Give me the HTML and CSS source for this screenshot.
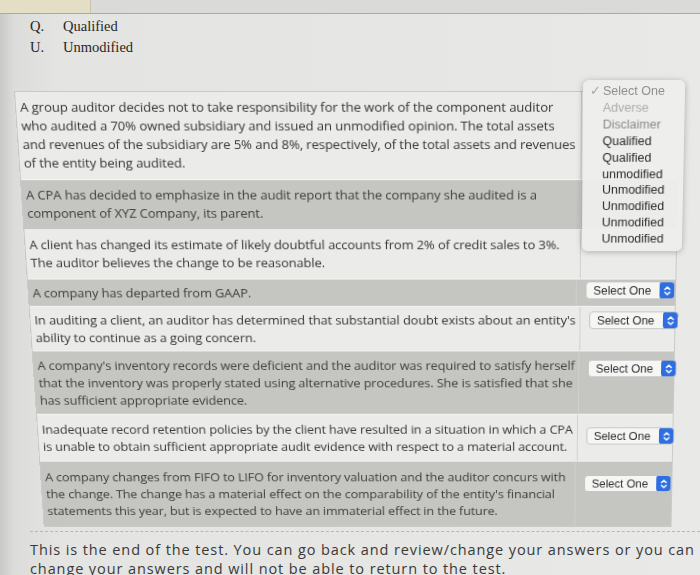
FILE: index.html
```html
<!DOCTYPE html>
<html>
<head>
<meta charset="utf-8">
<link rel="stylesheet" href="styles.css">
</head>
<body>
<div class="page">
  <div class="topbar">
    <div class="timer"><span>1 minute:</span></div>
  </div>

  <ul class="legend">
    <li><span class="key">Q.</span><span>Qualified</span></li>
    <li><span class="key">U.</span><span>Unmodified</span></li>
  </ul>

  <div class="quiz">
    <div class="matching">
      <div class="row light r1">
        <div class="q">A group auditor decides not to take responsibility for the work of the component auditor<br>who audited a 70% owned subsidiary and issued an unmodified opinion. The total assets<br>and revenues of the subsidiary are 5% and 8%, respectively, of the total assets and revenues<br>of the entity being audited.</div>
        <div class="a"></div>
      </div>
      <div class="row dark r2">
        <div class="q">A CPA has decided to emphasize in the audit report that the company she audited is a<br>component of XYZ Company, its parent.</div>
        <div class="a"></div>
      </div>
      <div class="row light r3">
        <div class="q">A client has changed its estimate of likely doubtful accounts from 2% of credit sales to 3%.<br>The auditor believes the change to be reasonable.</div>
        <div class="a"></div>
      </div>
      <div class="row dark r4">
        <div class="q">A company has departed from GAAP.</div>
        <div class="a"><div class="select"><span>Select One</span><i class="step"><svg viewBox="0 0 10 14" width="10" height="14"><path d="M2.5 5.5 L5 3 L7.5 5.5 M2.5 8.5 L5 11 L7.5 8.5" fill="none" stroke="#fff" stroke-width="1.6" stroke-linecap="round" stroke-linejoin="round"/></svg></i></div></div>
      </div>
      <div class="row light r5">
        <div class="q">In auditing a client, an auditor has determined that substantial doubt exists about an entity's<br>ability to continue as a going concern.</div>
        <div class="a"><div class="select"><span>Select One</span><i class="step"><svg viewBox="0 0 10 14" width="10" height="14"><path d="M2.5 5.5 L5 3 L7.5 5.5 M2.5 8.5 L5 11 L7.5 8.5" fill="none" stroke="#fff" stroke-width="1.6" stroke-linecap="round" stroke-linejoin="round"/></svg></i></div></div>
      </div>
      <div class="row dark r6">
        <div class="q">A company's inventory records were deficient and the auditor was required to satisfy herself<br>that the inventory was properly stated using alternative procedures. She is satisfied that she<br>has sufficient appropriate evidence.</div>
        <div class="a"><div class="select"><span>Select One</span><i class="step"><svg viewBox="0 0 10 14" width="10" height="14"><path d="M2.5 5.5 L5 3 L7.5 5.5 M2.5 8.5 L5 11 L7.5 8.5" fill="none" stroke="#fff" stroke-width="1.6" stroke-linecap="round" stroke-linejoin="round"/></svg></i></div></div>
      </div>
      <div class="row light r7">
        <div class="q">Inadequate record retention policies by the client have resulted in a situation in which a CPA<br>is unable to obtain sufficient appropriate audit evidence with respect to a material account.</div>
        <div class="a"><div class="select"><span>Select One</span><i class="step"><svg viewBox="0 0 10 14" width="10" height="14"><path d="M2.5 5.5 L5 3 L7.5 5.5 M2.5 8.5 L5 11 L7.5 8.5" fill="none" stroke="#fff" stroke-width="1.6" stroke-linecap="round" stroke-linejoin="round"/></svg></i></div></div>
      </div>
      <div class="row dark r8">
        <div class="q">A company changes from FIFO to LIFO for inventory valuation and the auditor concurs with<br>the change. The change has a material effect on the comparability of the entity's financial<br>statements this year, but is expected to have an immaterial effect in the future.</div>
        <div class="a"><div class="select"><span>Select One</span><i class="step"><svg viewBox="0 0 10 14" width="10" height="14"><path d="M2.5 5.5 L5 3 L7.5 5.5 M2.5 8.5 L5 11 L7.5 8.5" fill="none" stroke="#fff" stroke-width="1.6" stroke-linecap="round" stroke-linejoin="round"/></svg></i></div></div>
      </div>
    </div>

    <ul class="menu">
      <li class="checked"><span class="tick">✓</span>Select One</li>
      <li class="dim">Adverse</li>
      <li class="mid">Disclaimer</li>
      <li>Qualified</li>
      <li>Qualified</li>
      <li>unmodified</li>
      <li>Unmodified</li>
      <li>Unmodified</li>
      <li>Unmodified</li>
      <li>Unmodified</li>
    </ul>
  </div>

  <div class="sep"></div>

  <p class="endnote">This is the end of the test. You can go back and review/change your answers or you can submit.<br>change your answers and will not be able to return to the test.</p>
</div>
</body>
</html>
```

FILE: styles.css
```css
html, body {
  margin: 0;
  padding: 0;
  height: 100%;
  overflow: hidden;
}

body {
  background: linear-gradient(90deg, #c9c9c7 0px, #dcdcda 14px, #e4e4e2 60px, #e6e6e4 400px, #e9e9e8 700px);
  font-family: "Open Sans", "Liberation Sans", sans-serif;
  color: #363636;
}

.page {
  width: 700px;
  height: 575px;
  overflow: hidden;
}

.topbar {
  height: 13px;
  border-bottom: 1px solid #a9a9a7;
  background: #dadad8;
  overflow: hidden;
}

.timer {
  width: 90px;
  height: 13px;
  background: #e4dec6;
  border-right: 1px solid #c9c3ad;
  overflow: hidden;
}

.timer span {
  display: block;
  margin-top: -16px;
  padding-left: 2px;
  font: bold 17px "Liberation Sans", sans-serif;
  color: #b3422f;
  line-height: 20px;
}

.legend {
  list-style: none;
  margin: 2px 0 0 0;
  padding: 0 0 0 30px;
  font-family: "Liberation Serif", serif;
  font-size: 14.5px;
  color: #262626;
  line-height: 21px;
}

.legend li {
  display: flex;
}

.legend .key {
  width: 33px;
}

.quiz {
  position: relative;
  margin: 33px 0 0 14px;
  width: 666px;
  transform-origin: 518px 0;
  transform: perspective(1000px) rotateX(-7.5deg);
}

.matching {
  border: 1px solid #c9c9c7;
  background: #ebebea;
}

.row {
  display: flex;
  border-top: 1px solid #f4f4f3;
}

.row:first-child {
  border-top: none;
}

.row.light {
  background: #ebebea;
}

.row.dark {
  background: #c5c5c2;
}

.q {
  width: 558px;
  padding: 4px 4px;
  font-size: 13.2px;
  line-height: 19px;
  letter-spacing: -0.1px;
  white-space: nowrap;
  border-right: 1px solid #cfcfcd;
}

.r1 .q { padding-top: 6px; padding-bottom: 7px; }
.r2 .q, .r3 .q { padding-top: 6px; padding-bottom: 7px; }
.r4 .q { padding-top: 5px; padding-bottom: 4px; }
.r5 .q { padding-top: 5px; padding-bottom: 4px; }
.r6 .q { padding-top: 6px; padding-bottom: 5px; }
.r7 .q { padding-top: 7px; padding-bottom: 6px; }
.r8 .q { padding-top: 8px; padding-bottom: 7px; }

.row.dark .q {
  color: #3e3e3e;
}

.a {
  flex: 1;
  padding: 5px 0 0 9px;
}

.r4 .a { padding-top: 2px; }
.r6 .a { padding-top: 9px; }
.r7 .a { padding-top: 14px; }
.r8 .a { padding-top: 15px; }

.select {
  display: flex;
  align-items: center;
  width: 92px;
  height: 19px;
  background: #f6f6f5;
  border: 1px solid #c3c3c1;
  border-radius: 4px;
  box-sizing: border-box;
  font-family: "Liberation Sans", sans-serif;
  font-size: 12px;
  color: #2a2a2a;
  overflow: hidden;
}

.select span {
  flex: 1;
  padding-left: 7px;
}

.step {
  width: 16px;
  height: 19px;
  margin-right: -1px;
  background: #2f6ee0;
  border-radius: 4px;
  display: flex;
  align-items: center;
  justify-content: center;
}

.menu {
  position: absolute;
  left: 569px;
  top: -11px;
  width: 102px;
  margin: 0;
  padding: 3px 0 4px 0;
  list-style: none;
  background: rgba(237, 237, 236, 0.97);
  border-radius: 6px;
  box-shadow: 0 1px 6px rgba(0, 0, 0, 0.28);
  font-family: "Liberation Sans", sans-serif;
  font-size: 12.5px;
  line-height: 16.9px;
  color: #2a2a2a;
}

.menu li {
  padding-left: 20px;
  position: relative;
}

.menu .checked {
  color: #8e8e8c;
}

.menu .tick {
  position: absolute;
  left: 7px;
  color: #a6a6a4;
}

.menu .dim {
  color: #acacaa;
}

.menu .mid {
  color: #8a8a88;
}

.sep {
  margin: -26px 0 0 30px;
  border-top: 1px dashed #b7b7b5;
}

.endnote {
  margin: 8px 0 0 30px;
  font-size: 14.5px;
  line-height: 19px;
  letter-spacing: 0.9px;
  white-space: nowrap;
  color: #3a3a3a;
}
```
